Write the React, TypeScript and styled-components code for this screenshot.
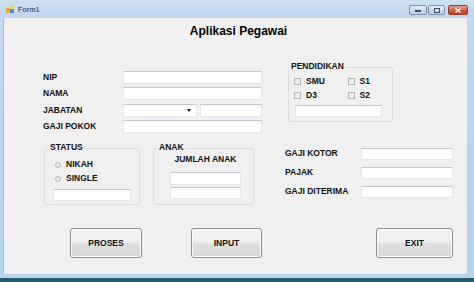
import React from "react";
import styled, { createGlobalStyle } from "styled-components";

const GlobalStyle = createGlobalStyle`
	html, body {
		margin: 0;
		padding: 0;
		background: #2a5f70;
	}
	* {
		box-sizing: border-box;
	}
`;

const Window = styled.div`
	width: 474px;
	height: 282px;
	display: flex;
	flex-direction: column;
	background: linear-gradient(#c6d9ef, #bcd4ee 40%, #b8d3ec);
	border-bottom: 4px solid #23596b;
	font-family: "Liberation Sans", Arial, sans-serif;
	color: #000;
	overflow: hidden;
`;

const TitleBar = styled.div`
	height: 18px;
	flex: none;
	display: flex;
	align-items: center;
	padding: 0 6px 0 6px;
	background: linear-gradient(#cfe0f3, #bfd5ee);
`;

const TitleText = styled.span`
	font-size: 7.5px;
	margin-left: 4px;
	color: #1e2a38;
	flex: 1;
`;

const Controls = styled.div`
	display: flex;
	gap: 1px;
	margin-top: 2px;
`;

const CtrlButton = styled.div<{ $close?: boolean; $w: number }>`
	width: ${({ $w }) => $w}px;
	height: 10px;
	border-radius: 2px;
	border: 1px solid ${({ $close }) => ($close ? "#8d3a2e" : "#7d90a8")};
	background: ${({ $close }) =>
		$close
			? "linear-gradient(#e7a596, #d0604c 50%, #c2412c)"
			: "linear-gradient(#e6eef7, #ccd9ea 50%, #bccde3)"};
	display: flex;
	align-items: center;
	justify-content: center;
	margin-left: ${({ $close }) => ($close ? "2px" : "0")};
`;

const Client = styled.div`
	height: 256px;
	flex: none;
	margin: 0 7px 0 3px;
	background: #f0f0f0;
	border-left: 1px solid #a8bdd3;
	display: flex;
	flex-direction: column;
`;

const Heading = styled.h1`
	margin: 6px 0 0 0;
	padding-left: 6px;
	font-size: 12px;
	line-height: 14px;
	font-weight: bold;
	text-align: center;
`;

const Body = styled.div`
	display: flex;
	margin-top: 22px;
	padding-left: 39px;
	gap: 23px;
`;

const LeftCol = styled.div`
	width: 219px;
	margin-top: 11px;
	display: flex;
	flex-direction: column;
`;

const RightCol = styled.div`
	display: flex;
	flex-direction: column;
`;

const FieldGrid = styled.div<{ $label: number; $gap: number; $row: number }>`
	display: grid;
	grid-template-columns: ${({ $label }) => $label}px 1fr;
	grid-auto-rows: ${({ $row }) => $row}px;
	row-gap: ${({ $gap }) => $gap}px;
	align-items: center;
`;

const Label = styled.span`
	font-size: 8.5px;
	font-weight: bold;
	line-height: 9px;
	white-space: nowrap;
	color: #111;
`;

const TextBox = styled.div<{ $w?: number; $h?: number }>`
	width: ${({ $w }) => ($w ? `${$w}px` : "100%")};
	height: ${({ $h }) => $h ?? 13}px;
	background: #fff;
	border: 1px solid #e2e5e9;
	border-top-color: #c2c6cc;
`;

const SplitRow = styled.div`
	display: flex;
	gap: 3px;
	height: 100%;
`;

const Combo = styled.div`
	width: 74px;
	height: 100%;
	background: #fff;
	border: 1px solid #e2e5e9;
	border-top-color: #c2c6cc;
	display: flex;
	align-items: center;
	justify-content: flex-end;
	padding-right: 5px;
`;

const Arrow = styled.span`
	width: 0;
	height: 0;
	border-left: 2.5px solid transparent;
	border-right: 2.5px solid transparent;
	border-top: 3px solid #111;
`;

const GroupRow = styled.div`
	display: flex;
	gap: 13px;
	margin-top: 15px;
	padding-left: 1px;
`;

const GroupBox = styled.div<{ $w: number }>`
	width: ${({ $w }) => $w}px;
	border: 1px solid #dcdcdc;
	border-radius: 3px;
	display: flex;
	flex-direction: column;
`;

const Legend = styled.span<{ $left: number }>`
	align-self: flex-start;
	margin: -6px 0 0 ${({ $left }) => $left}px;
	padding: 0 1px;
	background: #f0f0f0;
	font-size: 8.5px;
	font-weight: bold;
	line-height: 9px;
	color: #111;
`;

const OptionRow = styled.div`
	display: flex;
	align-items: center;
	height: 10px;
	gap: 5px;
`;

const Radio = styled.span`
	width: 6px;
	height: 6px;
	border-radius: 50%;
	border: 1px solid #b4b4b4;
	background: radial-gradient(circle at 40% 40%, #f6f6f6, #d6d6d6);
`;

const Check = styled.span`
	width: 7px;
	height: 7px;
	border: 1px solid #b3b3b3;
	background: linear-gradient(135deg, #e4e4e4, #f8f8f8);
`;

const StatusBody = styled.div`
	display: flex;
	flex-direction: column;
	padding: 8px 0 1px 8px;
	gap: 4px;
	${OptionRow} {
		margin-left: 2px;
	}
	${TextBox} {
		margin-top: 1px;
	}
`;

const AnakBody = styled.div`
	display: flex;
	flex-direction: column;
	align-items: center;
	padding: 3px 0 5px 4px;
	gap: 2px;
`;

const SubLabel = styled(Label)`
	margin-bottom: 6px;
`;

const CheckGrid = styled.div`
	display: grid;
	grid-template-columns: 53.5px auto;
	row-gap: 4.5px;
	padding: 5px 0 0 5px;
`;

const PendidikanBox = styled(GroupBox)`
	margin: 7px 0 0 3px;
	padding-bottom: 4px;
	${TextBox} {
		margin: 4px 0 0 6px;
	}
`;

const GajiGrid = styled(FieldGrid)`
	margin-top: 26px;
`;

const ButtonRow = styled.div`
	display: flex;
	margin-top: 23px;
	padding: 0 14px 0 66px;
`;

const Button = styled.div<{ $w: number; $gap?: number }>`
	width: ${({ $w }) => $w}px;
	height: 30px;
	margin-left: ${({ $gap }) => ($gap === undefined ? "auto" : `${$gap}px`)};
	border: 1px solid #8e8f8f;
	border-radius: 3px;
	background: linear-gradient(#f3f3f3, #ededed 50%, #e0e0e0 51%, #d8d8d8);
	box-shadow: inset 0 0 0 1px #fbfbfb;
	display: flex;
	align-items: center;
	justify-content: center;
	font-size: 8.5px;
	font-weight: bold;
	color: #111;
`;

function FormIcon() {
	return (
		<svg width="8" height="8" viewBox="0 0 8 8">
			<rect x="0" y="3" width="5" height="5" fill="#e8a23a" />
			<rect x="3" y="0" width="5" height="4" fill="#f2d35a" />
			<rect x="4" y="4" width="4" height="4" fill="#4f86c9" />
		</svg>
	);
}

function WindowControls() {
	return (
		<Controls>
			<CtrlButton $w={18}>
				<svg width="6" height="3" viewBox="0 0 6 3">
					<rect x="0" y="1" width="6" height="2" fill="#3c4d63" />
				</svg>
			</CtrlButton>
			<CtrlButton $w={17}>
				<svg width="6" height="5" viewBox="0 0 6 5">
					<rect x="0.5" y="0.5" width="5" height="4" fill="none" stroke="#3c4d63" />
				</svg>
			</CtrlButton>
			<CtrlButton $close $w={20}>
				<svg width="6" height="5" viewBox="0 0 6 5">
					<path d="M0.5 0.5 L5.5 4.5 M5.5 0.5 L0.5 4.5" stroke="#fff" strokeWidth="1.3" />
				</svg>
			</CtrlButton>
		</Controls>
	);
}

export default function App() {
	return (
		<>
			<GlobalStyle />
			<Window>
				<TitleBar>
					<FormIcon />
					<TitleText>Form1</TitleText>
					<WindowControls />
				</TitleBar>
				<Client>
					<Heading>Aplikasi Pegawai</Heading>
					<Body>
						<LeftCol>
							<FieldGrid $label={80} $gap={3.3} $row={13}>
								<Label>NIP</Label>
								<TextBox />
								<Label>NAMA</Label>
								<TextBox />
								<Label>JABATAN</Label>
								<SplitRow>
									<Combo>
										<Arrow />
									</Combo>
									<TextBox $w={62} />
								</SplitRow>
								<Label>GAJI POKOK</Label>
								<TextBox />
							</FieldGrid>
							<GroupRow>
								<GroupBox $w={96}>
									<Legend $left={4}>STATUS</Legend>
									<StatusBody>
										<OptionRow>
											<Radio />
											<Label>NIKAH</Label>
										</OptionRow>
										<OptionRow>
											<Radio />
											<Label>SINGLE</Label>
										</OptionRow>
										<TextBox $w={78} $h={12} />
									</StatusBody>
								</GroupBox>
								<GroupBox $w={101}>
									<Legend $left={4}>ANAK</Legend>
									<AnakBody>
										<SubLabel>JUMLAH ANAK</SubLabel>
										<TextBox $w={71} $h={13} />
										<TextBox $w={71} $h={12} />
									</AnakBody>
								</GroupBox>
							</GroupRow>
						</LeftCol>
						<RightCol>
							<PendidikanBox $w={105}>
								<Legend $left={1}>PENDIDIKAN</Legend>
								<CheckGrid>
									<OptionRow>
										<Check />
										<Label>SMU</Label>
									</OptionRow>
									<OptionRow>
										<Check />
										<Label>S1</Label>
									</OptionRow>
									<OptionRow>
										<Check />
										<Label>D3</Label>
									</OptionRow>
									<OptionRow>
										<Check />
										<Label>S2</Label>
									</OptionRow>
								</CheckGrid>
								<TextBox $w={87} $h={12} />
							</PendidikanBox>
							<GajiGrid $label={76} $gap={7.2} $row={12}>
								<Label>GAJI KOTOR</Label>
								<TextBox $w={92} $h={12} />
								<Label>PAJAK</Label>
								<TextBox $w={92} $h={12} />
								<Label>GAJI DITERIMA</Label>
								<TextBox $w={92} $h={12} />
							</GajiGrid>
						</RightCol>
					</Body>
					<ButtonRow>
						<Button $w={72} $gap={0}>PROSES</Button>
						<Button $w={71} $gap={49}>INPUT</Button>
						<Button $w={77}>EXIT</Button>
					</ButtonRow>
				</Client>
			</Window>
		</>
	);
}
